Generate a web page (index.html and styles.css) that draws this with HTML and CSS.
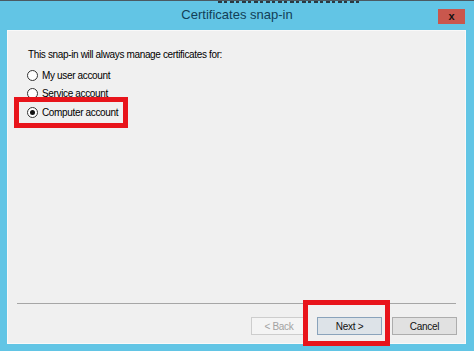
FILE: index.html
```html
<!DOCTYPE html>
<html lang="en">
<head>
    <meta charset="UTF-8">
    <title>Certificates snap-in</title>
    <link rel="stylesheet" href="styles.css">
</head>
<body>
    <div class="window">
        <!-- edge of the window underneath -->
        <div class="behind">
            <div class="behind-marks"></div>
        </div>

        <div class="titlebar">
            <span></span>
            <div class="title">Certificates snap-in</div>
            <button class="close-btn">x</button>
        </div>

        <div class="panel">
            <div class="content">
                <p class="intro">This snap-in will always manage certificates for:</p>
                <div class="options">
                    <div class="option"><span class="radio"></span>My user account</div>
                    <div class="option"><span class="radio"></span>Service account</div>
                    <div class="option marked"><span class="radio checked"></span>Computer account</div>
                </div>
            </div>

            <div class="footer">
                <div class="separator"></div>
                <div class="buttons">
                    <button class="btn disabled">&lt; Back</button>
                    <button class="btn default marked">Next &gt;</button>
                    <button class="btn">Cancel</button>
                </div>
            </div>
        </div>
    </div>
</body>
</html>
```

FILE: styles.css
```css
* {
    margin: 0;
    padding: 0;
    box-sizing: border-box;
}

body {
    background: #62c5e5;
    font-family: "Liberation Sans", Arial, sans-serif;
    color: #000;
}

.window {
    width: 474px;
    height: 351px;
    display: flex;
    flex-direction: column;
    overflow: hidden;
}

.behind {
    height: 4px;
    border-top: 1px solid #4b5a62;
    padding-left: 218px;
}

.behind-marks {
    width: 142px;
    height: 2px;
    background: repeating-linear-gradient(90deg, #2b3a42 0 4px, transparent 4px 6px, #2b3a42 6px 9px, transparent 9px 12px);
}

.titlebar {
    height: 26px;
    display: grid;
    grid-template-columns: 1fr auto 1fr;
}

.title {
    padding-top: 3px;
    font-size: 13px;
    line-height: 16px;
    color: #123f57;
}

.close-btn {
    justify-self: end;
    align-self: start;
    margin-top: 5px;
    margin-right: 9px;
    width: 27px;
    height: 15px;
    border: none;
    background: #c9574d;
    color: #111;
    font-family: "Liberation Sans", Arial, sans-serif;
    font-weight: bold;
    font-size: 11px;
    line-height: 13px;
}

.panel {
    height: 314px;
    margin: 0 8px 0 7px;
    background: #f0f0f0;
    border: 1px solid #f9f9f9;
    display: flex;
    flex-direction: column;
}

.content {
    padding: 17px 20px 0 20px;
    font-size: 10px;
    letter-spacing: -0.35px;
}

.intro {
    line-height: 14px;
}

.options {
    margin-top: 4px;
    margin-left: -1px;
    display: flex;
    flex-direction: column;
    align-items: flex-start;
    gap: 0.5px;
}

.option {
    height: 18px;
    display: inline-flex;
    align-items: center;
    gap: 4px;
    position: relative;
}

.radio {
    width: 11px;
    height: 11px;
    border: 1px solid #333;
    border-radius: 50%;
    background: #fff;
    display: flex;
    align-items: center;
    justify-content: center;
}

.radio.checked::before {
    content: "";
    width: 5px;
    height: 5px;
    border-radius: 50%;
    background: #111;
}

/* red annotation boxes */
.option.marked::after,
.btn.marked::after {
    content: "";
    position: absolute;
    border: 5px solid #e8141b;
}

.option.marked::after {
    left: -13px;
    top: -6px;
    right: -10px;
    bottom: -7px;
}

.footer {
    margin-top: auto;
}

.separator {
    height: 1px;
    margin: 0 9px;
    background: #a6a6a6;
}

.buttons {
    display: flex;
    justify-content: flex-end;
    gap: 10px;
    padding: 13px 8px 8px 0;
}

.btn {
    position: relative;
    width: 65px;
    height: 18px;
    background: #e1e1e1;
    border: 1px solid #adadad;
    font-family: "Liberation Sans", Arial, sans-serif;
    font-size: 10px;
    letter-spacing: -0.3px;
    color: #111;
}

.btn.disabled {
    width: 56px;
    background: #f4f4f4;
    border-color: #cdcdcd;
    color: #a2a2a2;
}

.btn.default {
    background: #dde3e8;
    border-color: #8aa3bb;
}

.btn.marked::after {
    left: -15px;
    top: -18px;
    right: -9px;
    bottom: -12px;
}
```
